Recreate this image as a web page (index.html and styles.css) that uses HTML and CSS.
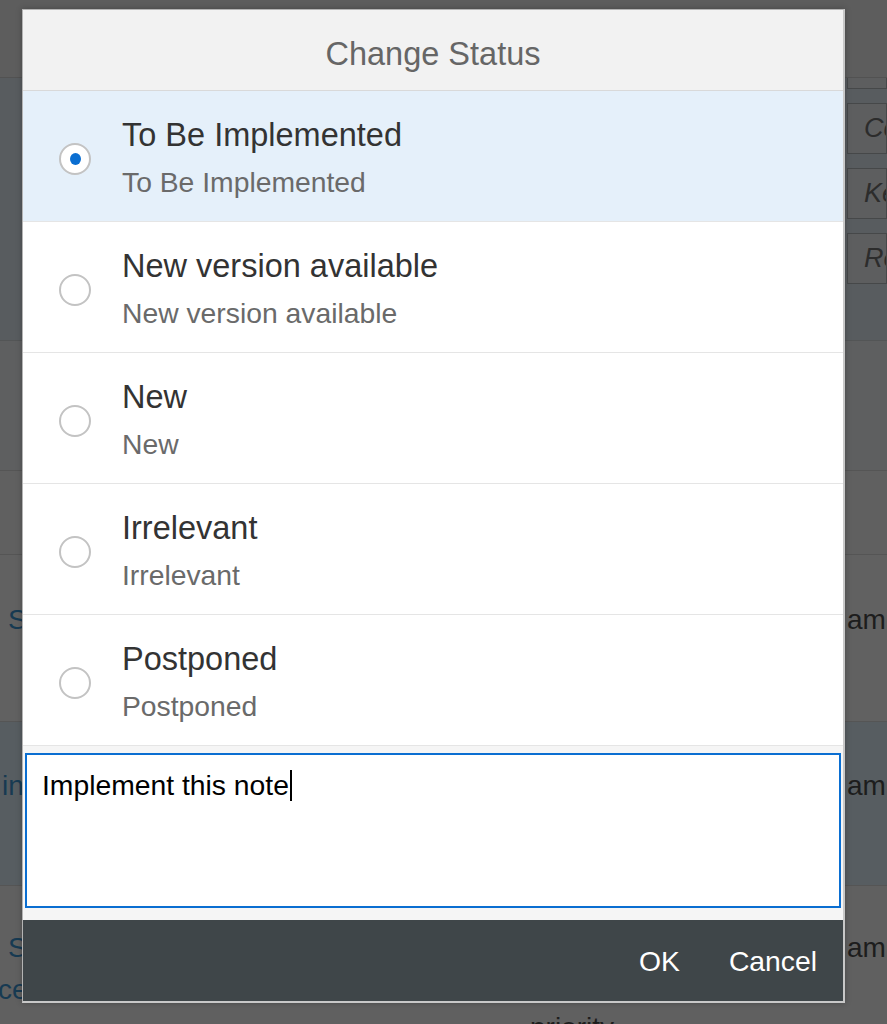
FILE: index.html
```html
<!DOCTYPE html>
<html lang="en">
<head>
<meta charset="utf-8">
<title>Change Status</title>
<link rel="stylesheet" href="styles.css">
</head>
<body>
<div class="page">
  <div class="topbar"></div>
  <div class="filters">
    <div class="field stub"></div>
    <div class="field"><span class="ph">Co</span></div>
    <div class="field"><span class="ph">Ke</span></div>
    <div class="field"><span class="ph">Re</span></div>
  </div>
  <div class="band b1"></div>
  <div class="band b2"></div>
  <div class="row r3">
    <div class="lcell"><span class="lnk">S</span></div>
    <div class="rcell">am</div>
  </div>
  <div class="row r4">
    <div class="lcell"><span class="lnk shift">in</span></div>
    <div class="rcell">am</div>
  </div>
  <div class="row r5">
    <div class="lcell stack"><span class="lnk">S</span><span class="lnk shift2">ce</span></div>
    <div class="mcell">priority</div>
    <div class="rcell">am</div>
  </div>
</div>

<div class="dialog">
  <div class="dlg-header">Change Status</div>
  <ul class="list">
    <li class="item selected">
      <span class="radio"><span class="dot"></span></span>
      <div class="texts">
        <div class="title">To Be Implemented</div>
        <div class="desc">To Be Implemented</div>
      </div>
    </li>
    <li class="item">
      <span class="radio"></span>
      <div class="texts">
        <div class="title">New version available</div>
        <div class="desc">New version available</div>
      </div>
    </li>
    <li class="item">
      <span class="radio"></span>
      <div class="texts">
        <div class="title">New</div>
        <div class="desc">New</div>
      </div>
    </li>
    <li class="item">
      <span class="radio"></span>
      <div class="texts">
        <div class="title">Irrelevant</div>
        <div class="desc">Irrelevant</div>
      </div>
    </li>
    <li class="item">
      <span class="radio"></span>
      <div class="texts">
        <div class="title">Postponed</div>
        <div class="desc">Postponed</div>
      </div>
    </li>
  </ul>
  <div class="note-wrap">
    <div class="note">Implement this note<span class="caret"></span></div>
  </div>
  <div class="dlg-footer">
    <span class="btn">OK</span>
    <span class="btn">Cancel</span>
  </div>
</div>
</body>
</html>
```

FILE: styles.css
```css
* { box-sizing: border-box; }
html, body {
  margin: 0;
  padding: 0;
  width: 887px;
  height: 1024px;
  overflow: hidden;
  background: #5f5f5f;
  font-family: "Liberation Sans", Arial, sans-serif;
}

/* ---------- dimmed page behind the dialog ---------- */
.page {
  width: 887px;
  height: 1024px;
  overflow: hidden;
  display: flex;
  flex-direction: column;
  background: #5f5f5f;
}
.page > * { flex: none; }
.topbar {
  height: 78px;
  background: #5d5d5d;
  border-bottom: 1px solid #525252;
}
.filters {
  height: 263px;
  background: #585c5f;
  padding-left: 847px;
  display: flex;
  flex-direction: column;
  gap: 14px;
  border-bottom: 1px solid #535556;
}
.field {
  height: 51px;
  flex: none;
  border: 1.5px solid #464849;
  background: #5d5e5f;
  display: flex;
  align-items: center;
  padding-left: 16px;
  white-space: nowrap;
  overflow: hidden;
}
.field.stub {
  height: 11px;
  border-top: none;
}
.ph {
  font-style: italic;
  font-size: 27px;
  color: #2c2c2c;
}
.band.b1 {
  height: 130px;
  background: #5e5f60;
  border-bottom: 1px solid #555;
}
.band.b2 {
  height: 84px;
  background: #606060;
  border-bottom: 1px solid #555;
}
.row {
  display: grid;
  grid-template-columns: 847px 1fr;
  font-size: 28px;
  border-bottom: 1px solid #555;
  overflow: hidden;
}
.row.r3 { height: 167px; background: #616161; padding-top: 47px; }
.row.r4 { height: 164px; background: #575d61; padding-top: 46px; }
.row.r5 {
  height: 138px;
  background: #606060;
  padding-top: 44px;
  grid-template-columns: 530px 317px 1fr;
  border-bottom: none;
}
.lcell { padding-left: 8px; }
.lcell.stack { display: flex; flex-direction: column; }
.lnk { color: #173a52; line-height: 36px; }
.lnk.shift { margin-left: -6px; }
.lnk.shift2 { margin-left: -10px; margin-top: 6px; }
.rcell { color: #1d1d1d; line-height: 36px; }
.mcell { color: #1d1d1d; line-height: 36px; padding-top: 80px; }

/* ---------- dialog ---------- */
.dialog {
  position: absolute;
  left: 22px;
  top: 9px;
  width: 823px;
  border: 1px solid #b4b4b4;
  border-right: 2px solid #c8c8c8;
  border-bottom: 2px solid #c8c8c8;
  background: #ffffff;
  box-shadow: 0 0 6px rgba(0, 0, 0, 0.25);
  display: flex;
  flex-direction: column;
}
.dlg-header {
  height: 81px;
  padding-top: 8px;
  background: #f2f2f2;
  border-bottom: 1px solid #d9d9d9;
  display: flex;
  align-items: center;
  justify-content: center;
  font-size: 32.5px;
  color: #666666;
}
.list {
  list-style: none;
  margin: 0;
  padding: 0;
}
.item {
  height: 131px;
  padding: 24px 0 0 36px;
  border-bottom: 1px solid #e5e5e5;
  display: flex;
  align-items: flex-start;
  gap: 31px;
  background: #ffffff;
}
.item.selected { background: #e5f0fa; }
.radio {
  width: 32px;
  height: 32px;
  margin-top: 28px;
  border: 2px solid #c3c3c3;
  border-radius: 50%;
  background: #ffffff;
  display: flex;
  align-items: center;
  justify-content: center;
  flex: none;
}
.dot {
  width: 11px;
  height: 12px;
  border-radius: 50%;
  background: #0a6ed1;
}
.texts { display: flex; flex-direction: column; }
.title {
  font-size: 32.5px;
  line-height: 40px;
  color: #333333;
}
.desc {
  margin-top: 9px;
  font-size: 28.3px;
  line-height: 36px;
  color: #6a6a6a;
}
.note-wrap {
  padding: 7px 2px 12px 2px;
  background: #f5f5f5;
}
.note {
  height: 155px;
  border: 2px solid #0a6ed1;
  background: #ffffff;
  padding: 12px 15px 0 15px;
  font-size: 28.3px;
  line-height: 36px;
  color: #000000;
}
.caret {
  display: inline-block;
  width: 2px;
  height: 31px;
  background: #000;
  vertical-align: -6px;
  margin-left: 1px;
}
.dlg-footer {
  height: 81px;
  background: #3f4649;
  display: flex;
  align-items: center;
  justify-content: flex-end;
  gap: 25px;
  padding-right: 14px;
}
.btn {
  font-size: 28.3px;
  color: #ffffff;
  padding: 0 12px;
  line-height: 40px;
}
```
